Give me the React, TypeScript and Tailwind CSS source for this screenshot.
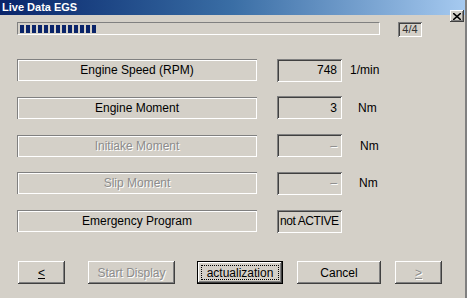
import React from 'react';

const font = { fontFamily: '"Liberation Sans", Arial, sans-serif' };

// classic win32 bevels
const raised =
  'shadow-[inset_-1px_-1px_0_#404040,inset_1px_1px_0_#ffffff,inset_-2px_-2px_0_#808080,inset_2px_2px_0_#d4d0c8]';
const sunken =
  'shadow-[inset_1px_1px_0_#808080,inset_-1px_-1px_0_#ffffff,inset_2px_2px_0_#404040,inset_-2px_-2px_0_#d4d0c8]';
const staticEdge = 'shadow-[inset_1px_1px_0_#808080,inset_-1px_-1px_0_#ffffff,inset_2px_2px_0_#ffffff]';
const disabledText = 'text-[#8c8c8c] [text-shadow:1px_1px_0_#ffffff]';

type Row = { label: string; value: string; unit: string; unitPad: string; disabled?: boolean; left?: boolean };

const rows: Row[] = [
  { label: 'Engine Speed (RPM)', value: '748', unit: '1/min', unitPad: 'pl-[8px]' },
  { label: 'Engine Moment', value: '3', unit: 'Nm', unitPad: 'pl-[16px]' },
  { label: 'Initiake Moment', value: '–', unit: 'Nm', unitPad: 'pl-[18px]', disabled: true },
  { label: 'Slip Moment', value: '–', unit: 'Nm', unitPad: 'pl-[17px]', disabled: true },
  { label: 'Emergency Program', value: 'not ACTIVE', unit: '', unitPad: '', left: true },
];

function Button({
  children,
  className,
  disabled,
  isDefault,
}: {
  children: React.ReactNode;
  className: string;
  disabled?: boolean;
  isDefault?: boolean;
}) {
  if (isDefault) {
    return (
      <div className={`h-[23px] border border-black bg-[#d4d0c8] ${className}`}>
        <div className={`h-full w-full p-[3px] ${raised}`}>
          <div className="flex h-full w-full items-center justify-center border border-dotted border-black text-[12px] text-black">
            {children}
          </div>
        </div>
      </div>
    );
  }
  return (
    <div
      className={`flex h-[23px] items-center justify-center bg-[#d4d0c8] text-[12px] ${raised} ${
        disabled ? disabledText : 'text-black'
      } ${className}`}
    >
      {children}
    </div>
  );
}

export default function App() {
  return (
    <div
      className="relative flex h-[298px] w-[467px] flex-col overflow-hidden border-r-2 border-r-[#808080] bg-[#d4d0c8]"
      style={font}
    >
      {/* title bar */}
      <div className="h-[15px] bg-gradient-to-r from-[#0a246a] via-[#3a6ea5] to-[#a6caf0] pl-[2px] text-[11px] font-bold leading-[14px] text-white">
        Live Data EGS
      </div>
      <div
        className={`absolute left-[450px] top-[10px] flex h-[12px] w-[14px] items-center justify-center bg-[#d4d0c8] ${raised}`}
      >
        <svg width="8" height="7" viewBox="0 0 8 7">
          <path d="M0 0 L8 7 M8 0 L0 7" stroke="#000" strokeWidth="1.6" />
        </svg>
      </div>

      {/* progress */}
      <div className="mt-[7px] flex items-start">
        <div className="ml-[17px] flex h-[13px] w-[363px] items-center border border-t-[#808080] border-l-[#808080] border-b-white border-r-white px-[2px]">
          <div className="flex gap-[2px]">
            {Array.from({ length: 13 }).map((_, i) => (
              <div key={i} className="h-[8px] w-[4px] bg-[#0a246a]" />
            ))}
          </div>
        </div>
        <div
          className={`ml-[18px] flex h-[15px] w-[24px] items-center justify-center text-[11px] text-[#333] ${sunken}`}
        >
          4/4
        </div>
      </div>

      {/* data rows */}
      <div className="mt-[22px] flex flex-col gap-[15.75px]">
        {rows.map((r) => (
          <div key={r.label} className="flex h-[22px] items-center">
            <div
              className={`ml-[17px] flex h-[22px] w-[240px] items-center justify-center text-[12px] ${staticEdge} ${
                r.disabled ? disabledText : 'text-black'
              }`}
            >
              {r.label}
            </div>
            <div
              className={`ml-[20px] flex h-[23px] w-[65px] items-center overflow-hidden whitespace-nowrap text-[12px] ${sunken} ${
                r.left ? 'justify-start pl-[3px] tracking-[-0.4px]' : 'justify-end pr-[5px]'
              } ${r.disabled ? disabledText : 'text-black'}`}
            >
              {r.value}
            </div>
            <div className={`text-[12px] text-black ${r.unitPad}`}>{r.unit}</div>
          </div>
        ))}
      </div>

      {/* buttons */}
      <div className="mt-[29px] flex items-center">
        <Button className="ml-[18px] w-[47px]">
          <span className="underline">&lt;</span>
        </Button>
        <Button className="ml-[23px] w-[87px]" disabled>
          Start Display
        </Button>
        <Button className="ml-[22px] w-[86px]" isDefault>
          actualization
        </Button>
        <Button className="ml-[14px] w-[84px]">Cancel</Button>
        <Button className="ml-[14px] w-[47px]" disabled>
          <span className="underline">&gt;</span>
        </Button>
      </div>
    </div>
  );
}
